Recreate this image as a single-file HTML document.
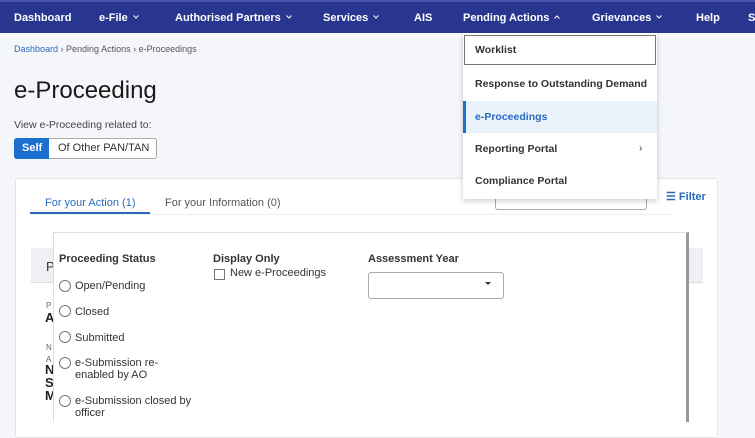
<!DOCTYPE html>
<html><head><meta charset="utf-8"><style>
*{box-sizing:border-box;margin:0;padding:0}
body{width:755px;height:413px;overflow:hidden;background:#f5f6fa;font-family:"Liberation Sans",Arial,sans-serif;position:relative;color:#222}
.abs{position:absolute;white-space:nowrap}
.nav{position:absolute;left:0;top:0;width:755px;height:33px;background:#293690;border-top:2px solid #4a57a8}
.nav span{position:absolute;top:10px;color:#fff;font-weight:bold;font-size:11px;white-space:nowrap}
.nav svg{margin-left:5px;vertical-align:2px}
.card{position:absolute;left:15px;top:178px;width:703px;height:260px;background:#fff;border:1px solid #e3e5ea;border-radius:3px}
.dd{position:absolute;left:463px;top:33px;width:194px;height:166px;background:#fff;box-shadow:0 2px 5px rgba(0,0,0,.2)}
.dd div{position:absolute;left:12px;font-size:10.5px;color:#333;font-weight:bold;white-space:nowrap}
.panel{position:absolute;left:53px;top:232px;width:636px;height:190px;background:#fff;border-top:1px solid #ddd;border-left:1px solid #ddd;border-right:3px solid #999}
.radio{position:absolute;width:12px;height:12px;border:1px solid #777;border-radius:50%}
.lbl{position:absolute;font-size:11px;color:#333;white-space:nowrap}
</style></head><body>
<div class="nav">
<span style="left:14px">Dashboard</span>
<span style="left:99px">e-File<svg width="6" height="4"><path d="M0.5 0.5L3 3L5.5 0.5" stroke="#fff" fill="none"/></svg></span>
<span style="left:175px">Authorised Partners<svg width="6" height="4"><path d="M0.5 0.5L3 3L5.5 0.5" stroke="#fff" fill="none"/></svg></span>
<span style="left:323px">Services<svg width="6" height="4"><path d="M0.5 0.5L3 3L5.5 0.5" stroke="#fff" fill="none"/></svg></span>
<span style="left:414px">AIS</span>
<span style="left:463px">Pending Actions<svg width="6" height="4"><path d="M0.5 3.5L3 1L5.5 3.5" stroke="#fff" fill="none"/></svg></span>
<span style="left:592px">Grievances<svg width="6" height="4"><path d="M0.5 0.5L3 3L5.5 0.5" stroke="#fff" fill="none"/></svg></span>
<span style="left:696px">Help</span>
<span style="left:748px">S</span>
</div>
<div class="abs" style="left:14px;top:44px;font-size:9px;color:#555"><span style="color:#2a6bbd">Dashboard</span> › Pending Actions › e-Proceedings</div>
<div class="abs" style="left:14px;top:77px;font-size:24px;color:#1a1a1a">e-Proceeding</div>
<div class="abs" style="left:14px;top:119px;font-size:10.5px;color:#444">View e-Proceeding related to:</div>
<div class="abs" style="left:14px;top:138px;width:143px;height:21px;border:1px solid #aaa;border-radius:3px;background:#fff"></div>
<div class="abs" style="left:14px;top:138px;width:35px;height:21px;background:#1a6fcf;border-radius:3px 0 0 3px;color:#fff;font-weight:bold;font-size:11px;padding:4px 0 0 8px">Self</div>
<div class="abs" style="left:58px;top:142px;font-size:11px;color:#333">Of Other PAN/TAN</div>
<div class="card"></div>
<div class="abs" style="left:45px;top:197px;font-size:11px;color:#2a6bbd">For your Action (1)</div>
<div class="abs" style="left:165px;top:197px;font-size:11px;color:#555">For your Information (0)</div>
<div class="abs" style="left:30px;top:212px;width:120px;height:2px;background:#2a6bbd"></div>
<div class="abs" style="left:30px;top:214px;width:642px;height:1px;background:#eee"></div>
<div class="abs" style="left:495px;top:184px;width:152px;height:26px;border:1px solid #aaa;border-radius:3px;background:#fff"></div>
<div class="abs" style="left:666px;top:190px;font-size:11px;color:#2a6bbd;font-weight:bold">☰ Filter</div>
<div class="abs" style="left:31px;top:248px;width:672px;height:35px;background:#eef0f4;border-bottom:1px solid #ddd"></div>
<div class="abs" style="left:46px;top:259px;font-size:13px;color:#333">P</div>
<div class="abs" style="left:46px;top:301px;font-size:8px;color:#666">P</div>
<div class="abs" style="left:45px;top:310px;font-size:13px;font-weight:bold">A</div>
<div class="abs" style="left:46px;top:342px;font-size:8px;color:#666;line-height:12px">N<br>A</div>
<div class="abs" style="left:45px;top:363px;font-size:13px;font-weight:bold;line-height:13px">N<br>S<br>M</div>
<div class="panel">
<div class="lbl" style="left:5px;top:20px;font-weight:bold">Proceeding Status</div>
<div class="radio" style="left:5px;top:47px"></div><div class="lbl" style="left:21px;top:47px">Open/Pending</div>
<div class="radio" style="left:5px;top:72px"></div><div class="lbl" style="left:21px;top:73px">Closed</div>
<div class="radio" style="left:5px;top:98px"></div><div class="lbl" style="left:21px;top:99px">Submitted</div>
<div class="radio" style="left:5px;top:124px"></div><div class="lbl" style="left:21px;top:124px;line-height:12px">e-Submission re-<br>enabled by AO</div>
<div class="radio" style="left:5px;top:162px"></div><div class="lbl" style="left:21px;top:162px;line-height:12px">e-Submission closed by<br>officer</div>
<div class="lbl" style="left:159px;top:20px;font-weight:bold">Display Only</div>
<div class="abs" style="left:160px;top:36px;width:11px;height:11px;border:1px solid #777"></div>
<div class="lbl" style="left:176px;top:34px">New e-Proceedings</div>
<div class="lbl" style="left:314px;top:20px;font-weight:bold">Assessment Year</div>
<div class="abs" style="left:314px;top:39px;width:136px;height:27px;border:1px solid #aaa;border-radius:3px"></div>
<div class="abs" style="left:431px;top:49px;width:0;height:0;border-left:3px solid transparent;border-right:3px solid transparent;border-top:3px solid #333"></div>
</div>
<div class="dd">
<div style="left:1px;top:2px;width:192px;height:30px;border:1px solid #777;background:#fff"></div>
<div style="left:12px;top:11px">Worklist</div>
<div style="left:12px;top:45px">Response to Outstanding Demand</div>
<div style="left:0;top:68px;width:194px;height:32px;background:#eaf2fb;border-left:3px solid #1a6fcf"></div>
<div style="left:12px;top:78px;color:#2a6bbd">e-Proceedings</div>
<div style="left:12px;top:110px">Reporting Portal</div>
<div style="left:176px;top:109px;font-weight:normal">›</div>
<div style="left:12px;top:142px">Compliance Portal</div>
</div>
</body></html>
